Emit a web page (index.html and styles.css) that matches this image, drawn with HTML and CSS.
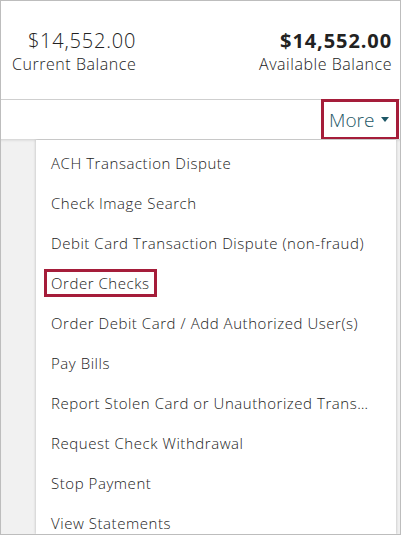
FILE: index.html
```html
<!DOCTYPE html>
<html lang="en">
<head>
    <meta charset="UTF-8">
    <title>Account Balances</title>
    <link rel="stylesheet" href="styles.css">
</head>
<body>
    <div class="frame">
        <div class="balances">
            <div class="balance">
                <div class="amount">$14,552.00</div>
                <div class="label">Current Balance</div>
            </div>
            <div class="balance">
                <div class="amount strong">$14,552.00</div>
                <div class="label">Available Balance</div>
            </div>
        </div>

        <div class="more-row">
            <button class="more-btn">
                More
                <span class="caret"></span>
            </button>
        </div>

        <div class="dropdown-area">
            <ul class="menu">
                <li class="menu-item">ACH Transaction Dispute</li>
                <li class="menu-item">Check Image Search</li>
                <li class="menu-item">Debit Card Transaction Dispute (non-fraud)</li>
                <li class="menu-item"><span class="highlight">Order Checks</span></li>
                <li class="menu-item">Order Debit Card / Add Authorized User(s)</li>
                <li class="menu-item">Pay Bills</li>
                <li class="menu-item">Report Stolen Card or Unauthorized Transactions</li>
                <li class="menu-item">Request Check Withdrawal</li>
                <li class="menu-item">Stop Payment</li>
                <li class="menu-item">View Statements</li>
            </ul>
        </div>
    </div>
</body>
</html>
```

FILE: styles.css
```css
* {
    margin: 0;
    padding: 0;
    box-sizing: border-box;
}

body {
    font-family: 'Open Sans', 'Liberation Sans', Arial, sans-serif;
    font-weight: 300;
    background: #fff;
    color: #222;
}

.frame {
    width: 401px;
    height: 535px;
    border: 1px solid #bdbdbd;
    overflow: hidden;
    display: flex;
    flex-direction: column;
}

.balances {
    height: 98px;
    display: flex;
    justify-content: space-between;
    align-items: center;
    padding: 4px 8px 0 11px;
}

.balance {
    text-align: right;
}

.amount {
    font-size: 20px;
    line-height: 24px;
    letter-spacing: 0.8px;
    color: #222;
}

.amount.strong {
    font-weight: 700;
    letter-spacing: 0.9px;
    color: #222;
}

.label {
    font-size: 16px;
    line-height: 22px;
    letter-spacing: 0.55px;
    color: #222;
}

.more-row {
    height: 40px;
    display: flex;
    justify-content: flex-end;
    border-top: 1px solid #cfcfcf;
}

.more-btn {
    margin-top: -1px;
    margin-right: 1px;
    height: 41px;
    width: 78px;
    border: 3px solid #a51d3a;
    background: #fff;
    color: #1d5766;
    font-family: inherit;
    font-weight: 300;
    font-size: 19px;
    display: flex;
    align-items: center;
    justify-content: space-between;
    padding: 0 7px 0 5px;
}

.caret {
    width: 0;
    height: 0;
    border-left: 4px solid transparent;
    border-right: 4px solid transparent;
    border-top: 5px solid #1d5766;
}

.dropdown-area {
    flex: 1;
    background: #f1f1f1;
    box-shadow: inset 0 3px 3px -2px rgba(0,0,0,0.15);
    padding: 1px 4px 0 35px;
    overflow: hidden;
}

.menu {
    list-style: none;
    background: #fff;
    box-shadow: -1px 0 2px rgba(0,0,0,0.12), 1px 0 2px rgba(0,0,0,0.12);
    padding-top: 3px;
    height: 100%;
}

.menu-item {
    height: 40px;
    line-height: 40px;
    padding: 0 20px 0 15px;
    font-size: 15px;
    letter-spacing: 0.55px;
    color: #222;
    white-space: nowrap;
    overflow: hidden;
    text-overflow: ellipsis;
}

.highlight {
    border: 3px solid #a51d3a;
    padding: 1px 4px;
    margin-left: -7px;
}
```
